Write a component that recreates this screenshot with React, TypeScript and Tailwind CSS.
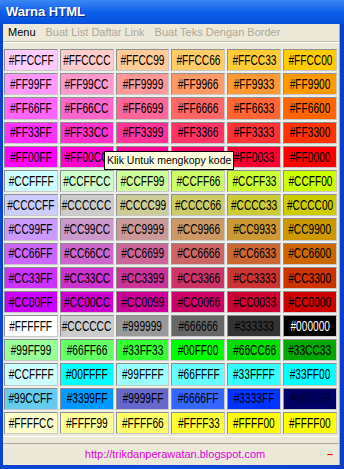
import React from 'react';

type Cell = { code: string; bg?: string; fg?: string };

const hexRows: string[][] = [
  ['FFCCFF', 'FFCCCC', 'FFCC99', 'FFCC66', 'FFCC33', 'FFCC00'],
  ['FF99FF', 'FF99CC', 'FF9999', 'FF9966', 'FF9933', 'FF9900'],
  ['FF66FF', 'FF66CC', 'FF6699', 'FF6666', 'FF6633', 'FF6600'],
  ['FF33FF', 'FF33CC', 'FF3399', 'FF3366', 'FF3333', 'FF3300'],
  ['FF00FF', 'FF00CC', 'FF0099', 'FF0066', 'FF0033', 'FF0000'],
  ['CCFFFF', 'CCFFCC', 'CCFF99', 'CCFF66', 'CCFF33', 'CCFF00'],
  ['CCCCFF', 'CCCCCC', 'CCCC99', 'CCCC66', 'CCCC33', 'CCCC00'],
  ['CC99FF', 'CC99CC', 'CC9999', 'CC9966', 'CC9933', 'CC9900'],
  ['CC66FF', 'CC66CC', 'CC6699', 'CC6666', 'CC6633', 'CC6600'],
  ['CC33FF', 'CC33CC', 'CC3399', 'CC3366', 'CC3333', 'CC3300'],
  ['CC00FF', 'CC00CC', 'CC0099', 'CC0066', 'CC0033', 'CC0000'],
  ['FFFFFF', 'CCCCCC', '999999', '666666', '333333', '000000'],
  ['99FF99', '66FF66', '33FF33', '00FF00', '66CC66', '33CC33'],
  ['CCFFFF', '00FFFF', '99FFFF', '66FFFF', '33FFFF', '33FF00'],
  ['99CCFF', '3399FF', '9999FF', '6666FF', '3333FF', '000099'],
  ['FFFFCC', 'FFFF99', 'FFFF66', 'FFFF33', 'FFFF00', 'FFFF00'],
];

// a few swatches on the page don't show the colour their label says
const overrides: Record<string, Partial<Cell>> = {
  '11-5': { fg: '#ffffff' },
  '12-4': { bg: '#00dd00' },
  '12-5': { bg: '#00a800' },
  '13-5': { bg: '#00ffff' },
  '14-0': { bg: '#66ccee' },
  '14-1': { bg: '#0099ff' },
  '14-2': { bg: '#6666cc' },
  '14-3': { bg: '#3366ff' },
  '14-4': { bg: '#0033ff' },
  '14-5': { bg: '#000066', fg: '#000033' },
};

const rows: Cell[][] = hexRows.map((row, r) =>
  row.map((hex, c) => ({
    code: '#' + hex,
    bg: '#' + hex,
    fg: '#000000',
    ...overrides[`${r}-${c}`],
  }))
);

const Swatch: React.FC<{ cell: Cell }> = ({ cell }) => (
  <div
    className="h-[22.2px] flex items-center justify-center overflow-hidden border border-t-[#8f8f8f] border-l-[#8f8f8f] border-b-[#c8c8c8] border-r-[#c8c8c8] cursor-pointer"
    style={{ backgroundColor: cell.bg, color: cell.fg }}
  >
    <span className="inline-block scale-x-[0.7] text-[14.5px] leading-none whitespace-nowrap">{cell.code}</span>
  </div>
);

export default function App() {
  return (
    <div className="relative w-[344px] h-[469px] flex flex-col bg-[#0b48d6] font-['Liberation_Sans',Arial,sans-serif] overflow-hidden">
      {/* title bar */}
      <div className="h-[24px] shrink-0 flex items-center pl-[6px] bg-gradient-to-b from-[#3a86f4] via-[#0d5fea] to-[#0750dc]">
        <span className="text-white text-[13px] font-bold [text-shadow:1px_1px_0_#0a2a8a]">Warna HTML</span>
      </div>

      <div className="flex-1 flex pl-[3px] pr-[4px] pb-[4px] bg-gradient-to-r from-[#0b44d0] via-[#0b48d6] to-[#0a3fc8]">
        <div className="flex-1 flex flex-col bg-[#ece9d8] border-r border-[#a9a69a]">
          {/* menu bar */}
          <div className="h-[18px] shrink-0 flex items-center gap-[10px] pl-[5px] text-[11px] border-b border-[#c5c1ae]">
            <span className="text-black">Menu</span>
            <span className="text-[#aca899]">Buat List Daftar Link</span>
            <span className="text-[#aca899]">Buat Teks Dengan Border</span>
          </div>
          <div className="h-px bg-white shrink-0" />

          {/* colour table */}
          <div className="pt-[6px] pl-px pr-[2px]">
            <div className="grid grid-cols-6 gap-x-[2px] gap-y-[2px] bg-[#eeeeea]">
              {rows.map((row, r) =>
                row.map((cell, c) => <Swatch key={`${r}-${c}`} cell={cell} />)
              )}
            </div>
          </div>

          <div className="flex-1 border-b border-[#aca899] mt-[2px] border-t border-t-white" />

          {/* status bar */}
          <div className="h-[21px] shrink-0 flex items-center relative text-[11px]">
            <span className="flex-1 text-center text-[#e000e0] pl-[8px]">http://trikdanperawatan.blogspot.com</span>
            <span className="absolute right-[6px] text-[#ff0000] font-bold">–</span>
          </div>
        </div>
      </div>

      {/* hover tooltip */}
      <div className="absolute left-[104px] top-[151px] h-[19px] px-[2px] flex items-center bg-[#ffffe1] border border-black text-[10.5px] text-black whitespace-nowrap">
        Klik Untuk mengkopy kode
      </div>
    </div>
  );
}
